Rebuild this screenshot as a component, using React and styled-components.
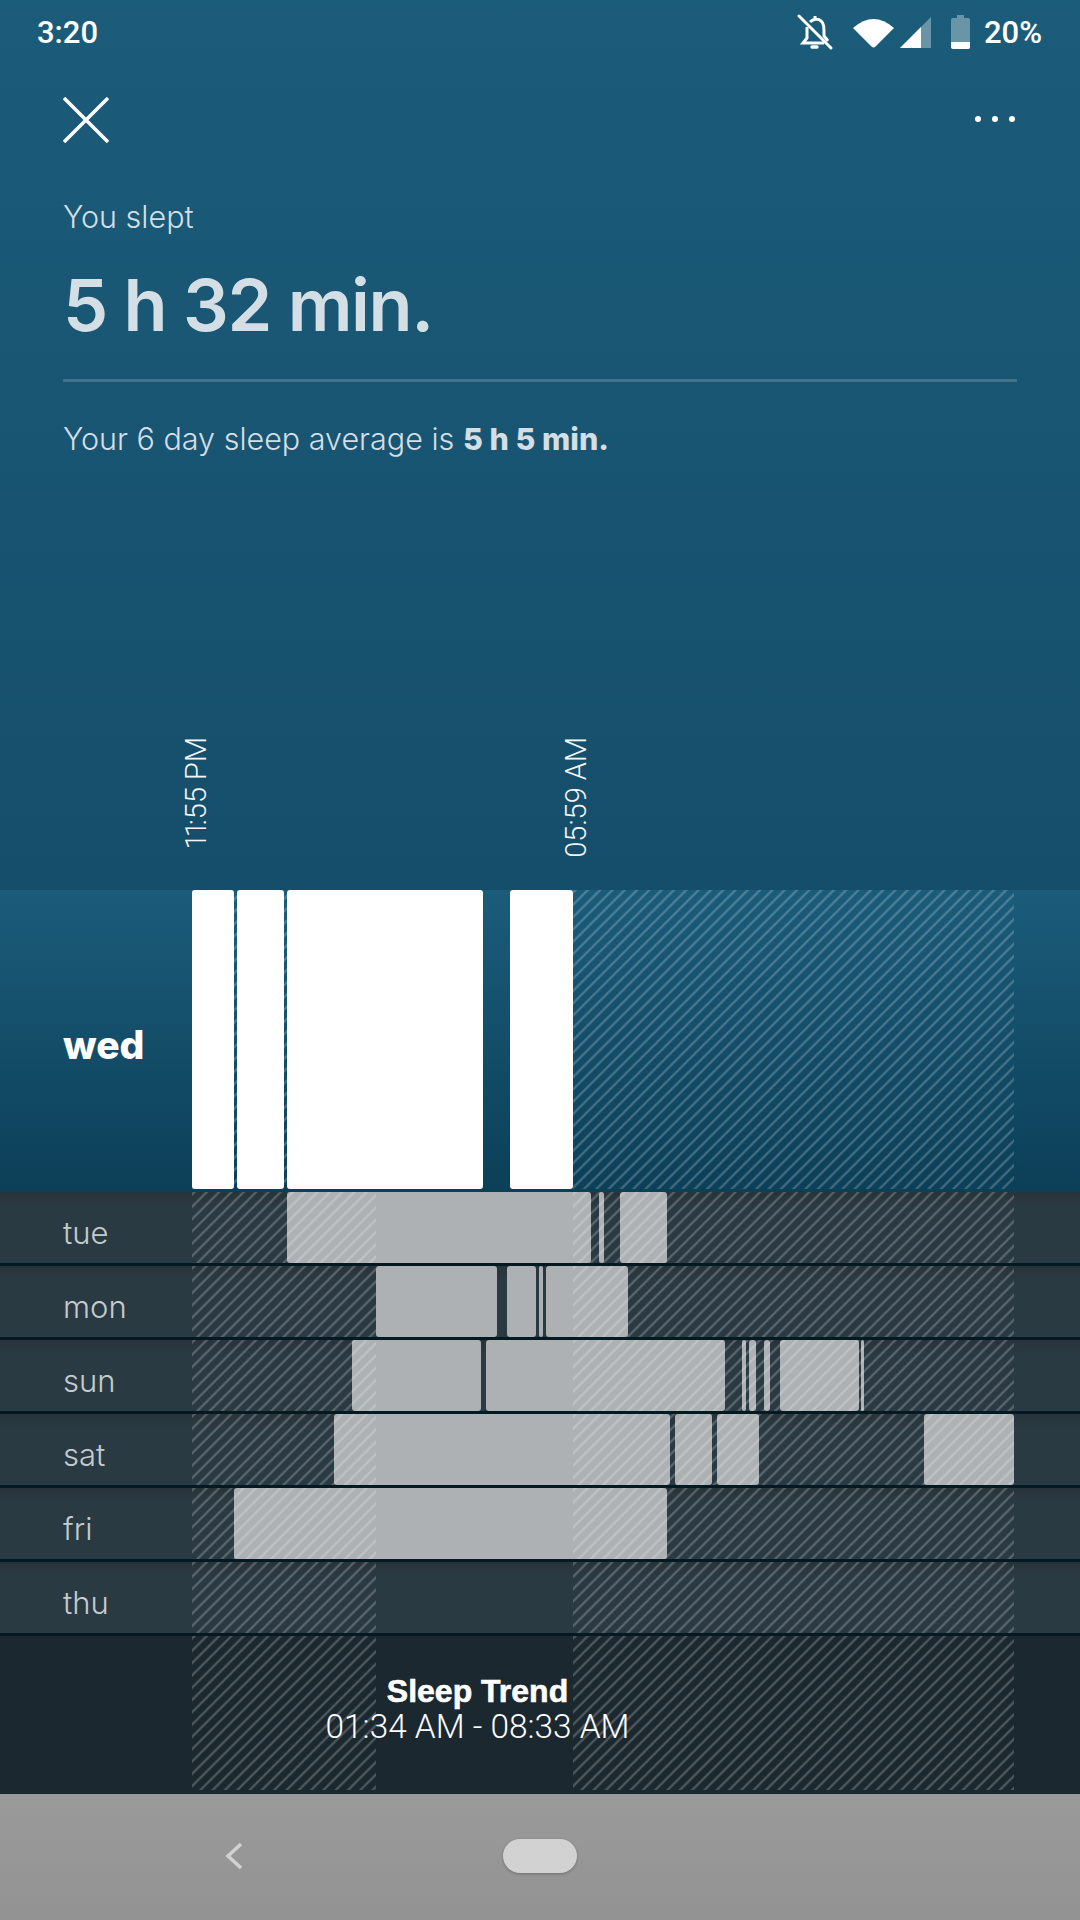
import React from 'react';
import styled, { createGlobalStyle } from 'styled-components';

const GlobalStyle = createGlobalStyle`
  html, body {
    margin: 0;
    padding: 0;
    background: #1b5c7a;
  }
  * {
    box-sizing: border-box;
  }
`;

const Screen = styled.div`
  display: flex;
  flex-direction: column;
  width: 1080px;
  height: 1920px;
  overflow: hidden;
  font-family: Inter, "Open Sans", sans-serif;
`;

const Summary = styled.header`
  display: flex;
  flex-direction: column;
  height: 890px;
  background: linear-gradient(180deg, #1b5c7a 0%, #154e6a 100%);
`;

const StatusBar = styled.div`
  display: flex;
  align-items: center;
  justify-content: space-between;
  height: 64px;
  padding: 0 38px 0 37px;
  color: #fff;
  font-family: Roboto, sans-serif;
  font-size: 31px;
  font-weight: 500;
`;

const StatusIcons = styled.div`
  display: flex;
  align-items: center;
`;

const StatusGap = styled.span`
  width: ${props => props.$size}px;
`;

const BatteryText = styled.span`
  margin-left: 14px;
`;

const ActionRow = styled.div`
  display: flex;
  align-items: center;
  justify-content: space-between;
  height: 45px;
  margin-top: 33px;
  padding: 0 64px 0 63px;
`;

const Content = styled.div`
  margin: 0 63px;
  color: #d3dee5;
`;

const Eyebrow = styled.div`
  margin-top: 57px;
  font-size: 30.5px;
  line-height: 36px;
  font-weight: 300;
`;

const Duration = styled.div`
  margin-top: 28px;
  font-size: 72px;
  line-height: 84px;
  font-weight: 600;
  letter-spacing: -1.4px;
`;

const Divider = styled.hr`
  height: 3px;
  margin: 32px 0 0;
  border: 0;
  background: #44718a;
`;

const Average = styled.div`
  margin-top: 39px;
  font-size: 30.5px;
  line-height: 36px;
  font-weight: 300;

  strong {
    font-weight: 800;
  }
`;

const TimeAxis = styled.div`
  display: flex;
  flex: 1;
  align-items: flex-start;
  padding: 0 0 0 184px;
`;

const TimeLabel = styled.span`
  margin-right: ${props => props.$gap}px;
  margin-top: 280px;
  color: #f2f6f8;
  font-family: Roboto, sans-serif;
  font-size: 29px;
  font-weight: 300;
  line-height: 24px;
  writing-mode: vertical-rl;
  transform: rotate(180deg);
`;

const NarrowDigits = styled.span`
  letter-spacing: -4px;
`;

const Row = styled.div`
  display: flex;
  flex: none;
  height: ${props => (props.$active ? 302 : 74)}px;
  background: ${props =>
    props.$active
      ? 'linear-gradient(180deg, #1b5c7a 0%, #0c3f58 100%)'
      : 'linear-gradient(180deg, #28333a 0px, #2a3a42 14px)'};
  border-bottom: ${props => (props.$active ? 0 : '3px solid #031a22')};
`;

const DayLabel = styled.div`
  display: flex;
  align-items: center;
  flex: none;
  width: 192px;
  padding: ${props => (props.$active ? 6 : 9)}px 0 0 63px;
  color: ${props => (props.$active ? '#fff' : '#c4cbce')};
  font-size: ${props => (props.$active ? 39 : 31)}px;
  font-weight: ${props => (props.$active ? 800 : 300)};
`;

const Track = styled.div`
  position: relative;
  flex: 1;
`;

const Hatch = styled.div`
  position: absolute;
  top: 0;
  bottom: ${props => props.$bottom || 0}px;
  left: ${props => props.$left}px;
  width: ${props => props.$width}px;
  z-index: 2;
  background-image: repeating-linear-gradient(
    135deg,
    transparent 0,
    rgba(255, 255, 255, 0.21) 1.2px,
    rgba(255, 255, 255, 0.21) 2.4px,
    transparent 3.6px,
    transparent 8.7px
  );
`;

const Segment = styled.div`
  position: absolute;
  top: 0;
  bottom: ${props => (props.$active ? 3 : 0)}px;
  z-index: ${props => (props.$active ? 3 : 1)};
  background: ${props => (props.$active ? '#fff' : '#adb1b4')};
  border-radius: 3px;
`;

const Footer = styled.footer`
  position: relative;
  display: flex;
  flex: 1;
  flex-direction: column;
  align-items: center;
  padding: 38px 125px 0 0;
  color: #fff;
  background: #1c282f;
  font-family: "Liberation Sans", Arial, sans-serif;
`;

const FooterTitle = styled.div`
  position: relative;
  z-index: 3;
  font-size: 32px;
  line-height: 35px;
  font-weight: 700;
  -webkit-text-stroke: 0.6px #fff;
`;

const FooterRange = styled.div`
  position: relative;
  z-index: 3;
  font-family: Roboto, sans-serif;
  font-size: 33.4px;
  line-height: 36px;
  font-weight: 300;
`;

const NavBar = styled.nav`
  display: flex;
  align-items: center;
  flex: none;
  height: 126px;
  padding: 0 0 2px 225px;
  background: linear-gradient(180deg, #9a9a9a 0%, #939393 100%);
`;

const HomePill = styled.div`
  width: 74px;
  height: 34px;
  margin-left: 260px;
  border-radius: 17px;
  background: #d2d2d2;
  box-shadow: 0 1px 3px rgba(0, 0, 0, 0.25);
`;

const hatchAreas = [
  { left: 0, width: 184 },
  { left: 381, width: 441 },
];

const days = [
  { name: 'wed', active: true, bars: [[192, 234], [237, 284], [287, 483], [510, 573]] },
  { name: 'tue', bars: [[287, 591], [599, 604], [620, 667]] },
  { name: 'mon', bars: [[376, 497], [507, 536], [539, 543], [546, 628]] },
  { name: 'sun', bars: [[352, 481], [486, 725], [742, 746], [749, 756], [764, 770], [780, 859], [861, 864]] },
  { name: 'sat', bars: [[334, 670], [675, 712], [717, 759], [924, 1014]] },
  { name: 'fri', bars: [[234, 667]] },
  { name: 'thu', bars: [] },
];

const TRACK_LEFT = 192;

function BellOffIcon() {
  return (
    <svg width="36" height="36" viewBox="0 0 36 36" fill="none" stroke="#fff" strokeWidth="3">
      <path d="M2 2 L34 34" strokeLinecap="round" />
      <path d="M10 13 V24 L6 29 H27" />
      <path d="M13 8 C16 5 21 4 24 7 C27 9 27 13 27 22 L31 27" />
      <path d="M15 33 H20" strokeWidth="3.5" strokeLinecap="round" />
      <path d="M18 2 V5" />
    </svg>
  );
}

function WifiIcon() {
  return (
    <svg width="41" height="31" viewBox="0 0 41 31" fill="#fff">
      <path d="M0 11 Q20.5 -7 41 11 L22.5 29.5 Q20.5 31.5 18.5 29.5 Z" />
    </svg>
  );
}

function SignalIcon() {
  return (
    <svg width="31" height="31" viewBox="0 0 31 31">
      <path d="M0 31 L31 0 V31 Z" fill="#fff" fillOpacity="0.35" />
      <path d="M0 31 L21 10 V31 Z" fill="#fff" />
    </svg>
  );
}

function BatteryIcon() {
  return (
    <svg width="19" height="34" viewBox="0 0 19 34">
      <path d="M6 0 H13 V3 H17 Q19 3 19 5 V32 Q19 34 17 34 H2 Q0 34 0 32 V5 Q0 3 2 3 H6 Z" fill="#fff" fillOpacity="0.35" />
      <path d="M0 27 H19 V32 Q19 34 17 34 H2 Q0 34 0 32 Z" fill="#fff" />
    </svg>
  );
}

function CloseIcon() {
  return (
    <svg width="46" height="46" viewBox="0 0 46 46" stroke="#fff" strokeWidth="3.5">
      <path d="M1 1 L45 45 M45 1 L1 45" />
    </svg>
  );
}

function MoreIcon() {
  return (
    <svg width="42" height="8" viewBox="0 0 42 8" fill="#fff">
      <circle cx="4" cy="3" r="3" />
      <circle cx="21" cy="3" r="3" />
      <circle cx="38" cy="3" r="3" />
    </svg>
  );
}

function BackIcon() {
  return (
    <svg width="18" height="28" viewBox="0 0 18 28" fill="none" stroke="#d2d2d2" strokeWidth="3.5">
      <path d="M16 2 L3 14 L16 26" />
    </svg>
  );
}

function DayRow({ day }) {
  return (
    <Row $active={day.active}>
      <DayLabel $active={day.active}>{day.name}</DayLabel>
      <Track>
        {hatchAreas.map(area => (
          <Hatch
            key={area.left}
            $left={area.left}
            $width={area.width}
            $bottom={day.active ? 3 : 0}
          />
        ))}
        {day.bars.map(([start, end]) => (
          <Segment
            key={start}
            $active={day.active}
            style={{ left: start - TRACK_LEFT, width: end - start }}
          />
        ))}
      </Track>
    </Row>
  );
}

export default function App() {
  return (
    <>
      <GlobalStyle />
      <Screen>
        <Summary>
          <StatusBar>
            <span>3:20</span>
            <StatusIcons>
              <BellOffIcon />
              <StatusGap $size={20} />
              <WifiIcon />
              <StatusGap $size={6} />
              <SignalIcon />
              <StatusGap $size={20} />
              <BatteryIcon />
              <BatteryText>20%</BatteryText>
            </StatusIcons>
          </StatusBar>
          <ActionRow>
            <CloseIcon />
            <MoreIcon />
          </ActionRow>
          <Content>
            <Eyebrow>You slept</Eyebrow>
            <Duration>5 h 32 min.</Duration>
            <Divider />
            <Average>
              Your 6 day sleep average is <strong>5 h 5 min.</strong>
            </Average>
          </Content>
          <TimeAxis>
            <TimeLabel $gap={356}>
              <NarrowDigits>11</NarrowDigits>:55 PM
            </TimeLabel>
            <TimeLabel>05:59 AM</TimeLabel>
          </TimeAxis>
        </Summary>
        {days.map(day => (
          <DayRow key={day.name} day={day} />
        ))}
        <Footer>
          <Hatch $left={192} $width={184} $bottom={4} />
          <Hatch $left={573} $width={441} $bottom={4} />
          <FooterTitle>Sleep Trend</FooterTitle>
          <FooterRange>01:34 AM - 08:33 AM</FooterRange>
        </Footer>
        <NavBar>
          <BackIcon />
          <HomePill />
        </NavBar>
      </Screen>
    </>
  );
}
